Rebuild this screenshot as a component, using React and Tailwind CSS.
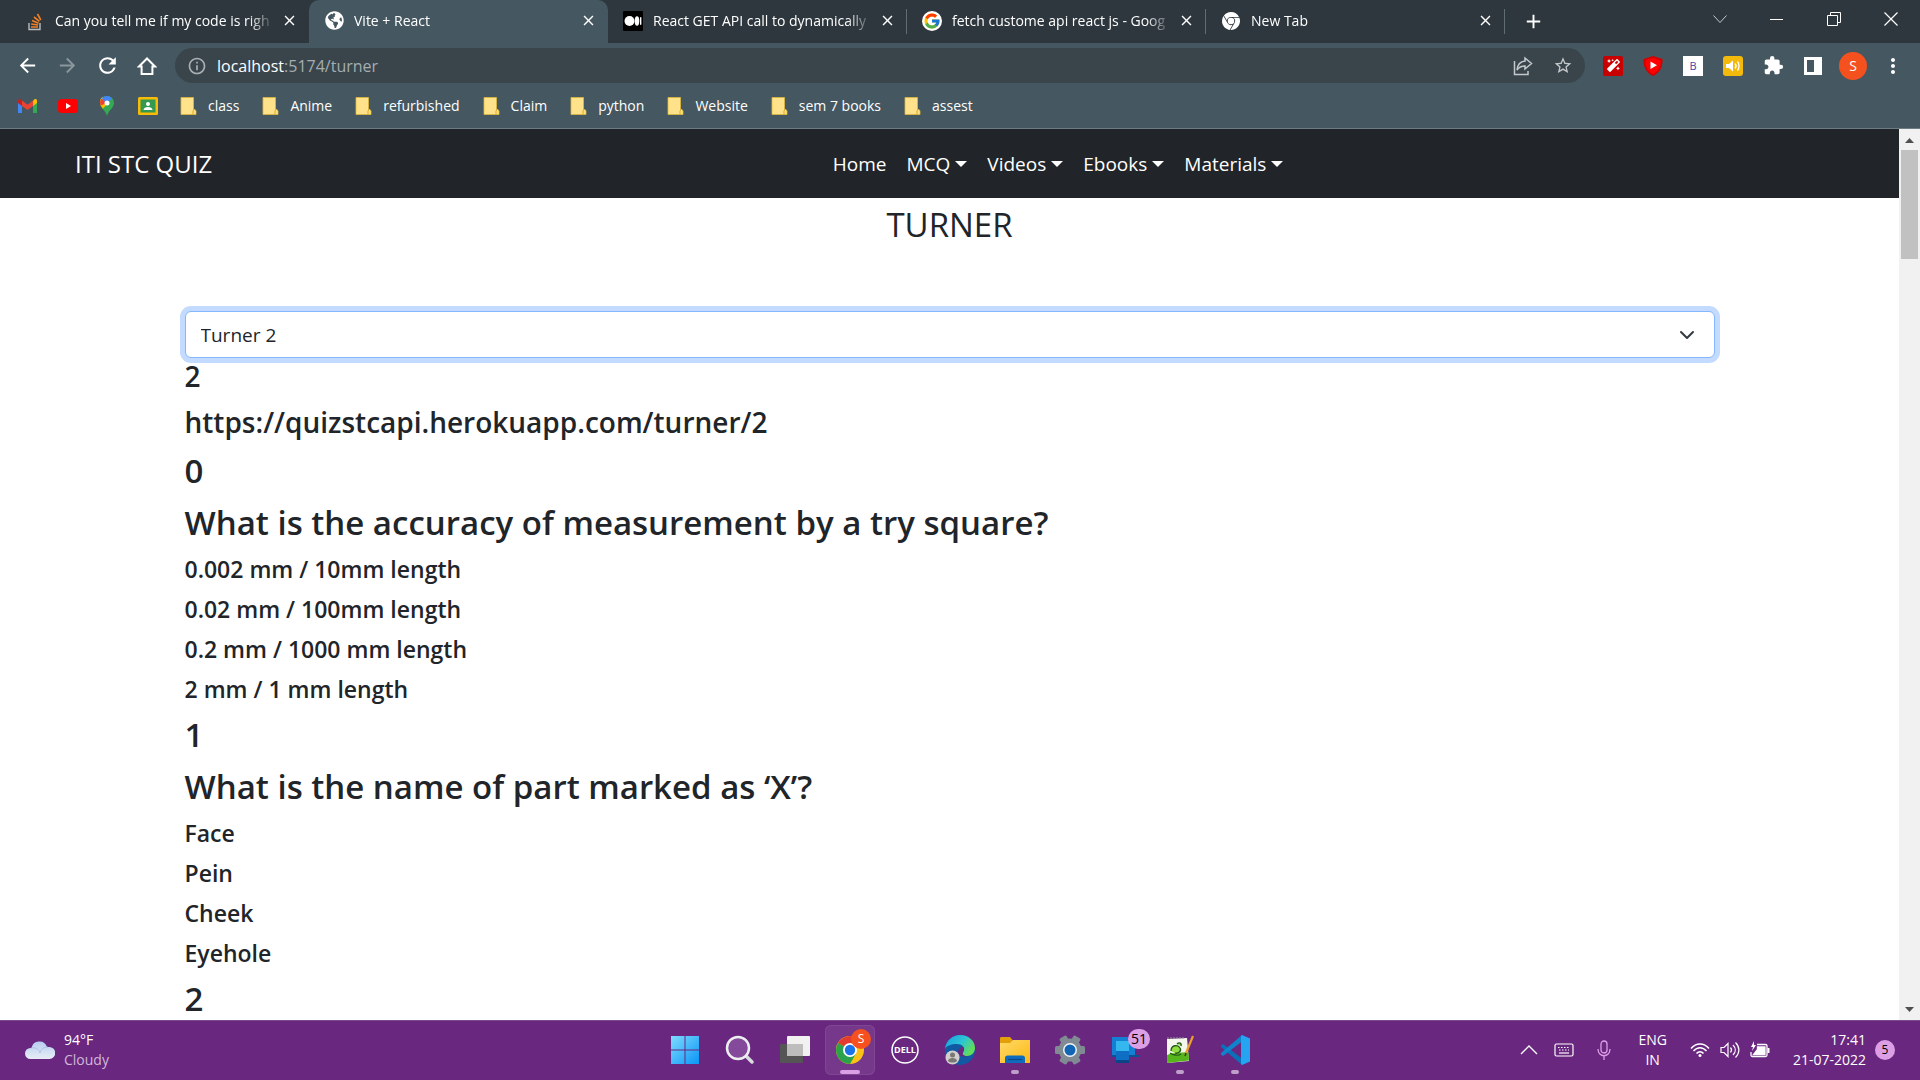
import React, { useState } from 'react';
import { FcGoogle } from 'react-icons/fc';
import { FaGlobeAmericas, FaMagic } from 'react-icons/fa';
import { SiGooglechrome } from 'react-icons/si';
import { MdArrowBack, MdArrowForward, MdClose, MdExtension, MdMoreVert, MdOutlineInfo, MdRefresh, MdStarBorder, MdAdd } from 'react-icons/md';

const StackIcon = () => (
    <svg width="18" height="20" viewBox="0 0 18 20" fill="none">
        <path d="M3 12v6.5h11V12" stroke="#bcbbbb" strokeWidth="1.4" />
        <path d="M5 16h7M5.2 13l6.9 1M6 9.6l6.5 2.6M8 6l5.4 4.3M11.5 3l3.3 6" stroke="#f48024" strokeWidth="1.6" />
    </svg>
);

const GoogleIcon = () => (
    <span className="flex size-5 items-center justify-center rounded-full bg-white">
        <FcGoogle size={18} />
    </span>
);

const MediumIcon = () => (
    <svg width="20" height="20" viewBox="0 0 20 20">
        <rect width="20" height="20" rx="1" fill="#000" />
        <g fill="#fff">
            <circle cx="6.5" cy="10" r="5" />
            <ellipse cx="14" cy="10" rx="2.3" ry="4.8" />
            <rect x="17" y="6" width="1.4" height="8" rx="0.7" />
        </g>
    </svg>
);

const HomeIcon = () => (
    <svg width="20" height="20" viewBox="0 0 20 20" fill="none" stroke="#fff" strokeWidth="2">
        <path d="M2 10.5 10 2.5l8 8h-2.6V18H4.6v-7.500z" />
    </svg>
);

const ShareIcon = () => (
    <svg width="20" height="20" viewBox="0 0 20 20" fill="none" stroke="#c3c8cb" strokeWidth="1.5">
        <path d="M1.500 5v13.500H15V15" />
        <path d="M12 2l6.500 5.500L12 13V10c-3.500 0-6 1-8 4 .5-5 3-8.500 8-9z" />
    </svg>
);

const GmailIcon = () => (
    <svg width="19" height="14" viewBox="0 0 19 14">
        <path d="M0 1.500V14h4V5z" fill="#4285f4" />
        <path d="M19 1.500V14h-4V5z" fill="#34a853" />
        <path d="M15 2v5l4-3V1.800C19 0 17.300-.3 16.200.6z" fill="#fbbc04" />
        <path d="M4 2v5L0 4V1.800C0 0 1.700-.3 2.800.6z" fill="#c5221f" />
        <path d="M4 1.500v5.400l5.500 4.200L15 6.900V1.500L9.500 5.700z" fill="#ea4335" />
    </svg>
);

const YoutubeIcon = () => (
    <svg width="20" height="14" viewBox="0 0 20 14">
        <rect width="20" height="14" rx="3.500" fill="#f00" />
        <path d="M8 4l5 3-5 3z" fill="#fff" />
    </svg>
);

const MapsIcon = () => (
    <svg width="14" height="20" viewBox="0 0 14 20">
        <path d="M7 0C3 0 0 3 0 7c0 5 5.500 7 7 13 1.500-6 7-8 7-13 0-4-3-7-7-7z" fill="#34a853" />
        <path d="M1 10C-1 6 0 2 3 1.100L8 7l-5 5.800z" fill="#fbbc04" />
        <path d="M1.600 2.500 7 7 .6 9.500C-.4 6.500 0 4.500 1.600 2.500z" fill="#ea4335" />
        <path d="M1.800 2.200C4-.6 9-.8 12 2.200L7 8z" fill="#4285f4" />
        <circle cx="7" cy="7" r="2.500" fill="#fff" />
    </svg>
);

const ClassroomIcon = () => (
    <svg width="20" height="18" viewBox="0 0 20 18">
        <rect width="20" height="18" rx="1.500" fill="#f9bb05" />
        <rect x="2.500" y="2.500" width="15" height="13" fill="#34994f" />
        <circle cx="10" cy="7" r="2" fill="#fff" />
        <path d="M5.500 13c0-4 9-4 9 0z" fill="#fff" />
    </svg>
);

const FolderIcon = () => (
    <svg width="17" height="18" viewBox="0 0 17 18">
        <path d="M1 .5h12.500v12H15l1 1.500v3.500H1z" fill="#ffe28a" stroke="#e0b93c" strokeWidth="0.800" />
        <path d="M13 17.500v-3.500l1-1.500" stroke="#d9a91e" fill="none" />
    </svg>
);

const ShieldPlayIcon = () => (
    <svg width="20" height="20" viewBox="0 0 20 20">
        <path d="M10 0l9.500 3c.5 8-3 14-9.500 17C3.500 17 0 11 .5 3z" fill="#d40000" />
        <path d="M10 2l7.500 2.500C18 11 15 15.500 10 18 5 15.500 2 11 2.500 4.500z" fill="#f00" />
        <path d="M7.500 5.500v7.500l6.500-3.700z" fill="#fff" />
    </svg>
);

const SpeakerIcon = () => (
    <svg width="20" height="20" viewBox="0 0 20 20">
        <rect width="20" height="20" rx="3" fill="#f3b90b" />
        <path d="M3 8h3l4-3.500v11L6 12H3z" fill="#fff" />
        <path d="M12 7.500c1.300 1.500 1.300 3.500 0 5M14.500 5.500c2 2.500 2 6.500 0 9" stroke="#fff" strokeWidth="1.300" fill="none" />
    </svg>
);

const SidePanelIcon = () => (
    <svg width="18" height="18" viewBox="0 0 18 18">
        <path d="M0 0h18v18H0zM3 3v12h7V3z" fill="#fff" fillRule="evenodd" />
    </svg>
);

const CloudIcon = () => (
    <svg width="30" height="22" viewBox="0 0 30 22">
        <defs>
            <linearGradient id="cloud" x1="0" y1="0" x2="0" y2="1">
                <stop offset="0" stopColor="#b7cdf0" />
                <stop offset="1" stopColor="#e8edf5" />
            </linearGradient>
        </defs>
        <path d="M5.500 20a5.500 5.500 0 0 1 0-11h1a8 8 0 0 1 15.500-1h2a6 6 0 0 1 .5 12z" fill="url(#cloud)" />
        <path d="M6 9c4-1 8 1 9 5 1-4 4-6 8-6" stroke="#a5bbdf" strokeWidth="0.800" fill="none" />
    </svg>
);

const StartIcon = () => (
    <svg width="30" height="30" viewBox="0 0 30 30">
        <defs>
            <linearGradient id="start" x1="0" y1="0" x2="1" y2="1">
                <stop offset="0" stopColor="#7fdcff" />
                <stop offset="1" stopColor="#0a95f5" />
            </linearGradient>
        </defs>
        <path d="M1 1h13.500v13.500H1zM15.500 1H29v13.500H15.500zM1 15.500h13.500V29H1zM15.500 15.500H29V29H15.500z" fill="url(#start)" />
    </svg>
);

const SearchIcon = () => (
    <svg width="30" height="30" viewBox="0 0 30 30" fill="none">
        <path d="M21 21l6 6" stroke="#d9dcdf" strokeWidth="3.500" strokeLinecap="round" />
        <circle cx="13" cy="13" r="11" fill="#84499a" stroke="#eceef0" strokeWidth="2.500" />
    </svg>
);

const TaskViewIcon = () => (
    <svg width="30" height="30" viewBox="0 0 30 30">
        <rect x="0" y="9" width="23" height="19" rx="1" fill="#555" />
        <rect x="7" y="1" width="23" height="20" rx="1" fill="#f1f1f1" />
        <path d="M7 9h16v12H8l-1-1z" fill="#bdbdbd" />
    </svg>
);

const ChromeIcon = () => (
    <svg width="28" height="28" viewBox="0 0 28 28">
        <circle cx="14" cy="14" r="14" fill="#fbc116" />
        <path d="M14 14L1.900 7A14 14 0 0 1 26.100 7z" fill="#e33b2e" />
        <path d="M14 14l6 3.500L14 28A14 14 0 0 1 1.900 7z" fill="#2ba24c" />
        <circle cx="14" cy="14" r="7" fill="#fff" />
        <circle cx="14" cy="14" r="5.200" fill="#1a73e8" />
    </svg>
);

const DellIcon = () => (
    <svg width="30" height="30" viewBox="0 0 30 30">
        <circle cx="15" cy="15" r="13" fill="none" stroke="#fff" strokeWidth="1.500" />
        <text x="15" y="18" textAnchor="middle" fontSize="9" fontWeight="700" fill="#fff" fontFamily="Open Sans, sans-serif">DELL</text>
    </svg>
);

const EdgeIcon = () => (
    <svg width="30" height="30" viewBox="0 0 30 30">
        <defs>
            <linearGradient id="edge" x1="0" y1="0" x2="1" y2="0.500">
                <stop offset="0" stopColor="#1b9de2" />
                <stop offset="0.600" stopColor="#2cc6d4" />
                <stop offset="1" stopColor="#62dc5a" />
            </linearGradient>
        </defs>
        <circle cx="15" cy="15" r="15" fill="#1259a4" />
        <path d="M0 14C1 5 8 0 15 0c9 0 15 6 15 13 0 5-4 8-8 8-4 0-6-2-4-4 3-5-1-8-6-8C6 9 1 11 0 14z" fill="url(#edge)" />
        <path d="M18 12c2 2 1 4 0 5.500-1 2 1 3.500 4 3.500-4 2-9 0-9-4 0-3 3-5 5-5z" fill="#69277f" />
        <circle cx="7.500" cy="22.500" r="7" fill="#d2d0ce" />
        <circle cx="7.500" cy="20" r="2.500" fill="#7a7774" />
        <path d="M3 26c0-4 9-4 9 0-2 2-7 2-9 0z" fill="#7a7774" />
    </svg>
);

const ExplorerIcon = () => (
    <svg width="30" height="28" viewBox="0 0 30 28">
        <defs>
            <linearGradient id="explorer" x1="0" y1="0" x2="1" y2="1">
                <stop offset="0" stopColor="#ffd968" />
                <stop offset="1" stopColor="#fdb913" />
            </linearGradient>
        </defs>
        <path d="M0 2.500C0 1.500.5 1 1.500 1H10l3 3.500V9H0z" fill="#e3a008" />
        <path d="M0 7h10l3-3h17v23H0z" fill="url(#explorer)" />
        <path d="M5 27v-5c0-1.500 1-2.500 2.500-2.500h15c1.500 0 2.500 1 2.500 2.500v5z" fill="#0f6cbd" />
        <path d="M8 23.500h14" stroke="#0b4a86" strokeWidth="1.200" />
    </svg>
);

const SettingsIcon = () => (
    <svg width="30" height="30" viewBox="0 0 30 30">
        <g fill="#808a93">
            <circle cx="15" cy="15" r="11.500" />
            <rect x="11" y="0" width="8" height="30" rx="1.500" transform="rotate(30 15 15)" />
            <rect x="11" y="0" width="8" height="30" rx="1.500" transform="rotate(90 15 15)" />
            <rect x="11" y="0" width="8" height="30" rx="1.500" transform="rotate(150 15 15)" />
        </g>
        <circle cx="15" cy="15" r="7" fill="#f2f2f2" />
        <circle cx="15" cy="15" r="5.500" fill="#1066b5" />
    </svg>
);

const PhoneIcon = () => (
    <svg width="30" height="30" viewBox="0 0 30 30">
        <path d="M2 2h23v18H2z" fill="#1380d3" />
        <path d="M1 20h28v2H1z" fill="#0b4f94" />
        <path d="M6 6h13v22H6z" fill="#0f6fc4" />
        <path d="M6 6h13v10H6z" fill="#33b7ee" />
        <path d="M6 25h13v3H6z" fill="#0a4686" />
    </svg>
);

const NotepadIcon = () => (
    <svg width="30" height="30" viewBox="0 0 30 30">
        <path d="M2 4l20-1 2 23-22 2z" fill="#f4f6ee" />
        <path d="M2 20c8-3 14-2 21.500-3l.5 8.500L2 28z" fill="#56b51c" />
        <path d="M3 4V2M6 4V2M9 4V2M12 4V2M15 4V2M18 4V2" stroke="#999" />
        <path d="M6 16c0-6 7-7 9-3 2 3-2 6-5 5M12 9c2-2 5-1 4 2M5 18c3 2 8 3 11 1" stroke="#23581a" strokeWidth="1.300" fill="#8fdd3e" />
        <path d="M28 1l-7 17" stroke="#e9a02c" strokeWidth="2.200" />
        <path d="M21 18l-1 3" stroke="#54330e" strokeWidth="1.500" />
    </svg>
);

const VscodeIcon = () => (
    <svg width="30" height="30" viewBox="0 0 30 30">
        <path d="M1 10.500l2-1.500L24 25l-2 5L1 12z" fill="#0a71b9" />
        <path d="M1 19.500L3 21 24 5l-2-5L1 18z" fill="#0f84cd" />
        <path d="M22 0l8 3.500v23L22 30l-1-1V1z" fill="#26a4f2" />
    </svg>
);

const tabs = [
    { title: 'Can you tell me if my code is righ', icon: <StackIcon /> },
    { title: 'Vite + React', icon: <FaGlobeAmericas size={19} />, active: true },
    { title: 'React GET API call to dynamically', icon: <MediumIcon />, divider: true },
    { title: 'fetch custome api react js - Goog', icon: <GoogleIcon />, divider: true },
    { title: 'New Tab', icon: <SiGooglechrome size={18} />, divider: true },
];

const bookmarks = ['class', 'Anime', 'refurbished', 'Claim', 'python', 'Website', 'sem 7 books', 'assest'];

const menus = ['MCQ', 'Videos', 'Ebooks', 'Materials'];

const questions = [
    {
        question: 'What is the accuracy of measurement by a try square?',
        options: ['0.002 mm / 10mm length', '0.02 mm / 100mm length', '0.2 mm / 1000 mm length', '2 mm / 1 mm length'],
    },
    {
        question: 'What is the name of part marked as ‘X’?',
        options: ['Face', 'Pein', 'Cheek', 'Eyehole'],
    },
    { question: '', options: [] },
];

const apps = [
    { name: 'Start', icon: <StartIcon /> },
    { name: 'Search', icon: <SearchIcon /> },
    { name: 'Task View', icon: <TaskViewIcon /> },
    { name: 'Google Chrome', icon: <ChromeIcon />, active: true },
    { name: 'My Dell', icon: <DellIcon /> },
    { name: 'Microsoft Edge', icon: <EdgeIcon /> },
    { name: 'File Explorer', icon: <ExplorerIcon />, running: true },
    { name: 'Settings', icon: <SettingsIcon /> },
    { name: 'Phone Link', icon: <PhoneIcon />, count: 51 },
    { name: 'Notepad++', icon: <NotepadIcon />, running: true },
    { name: 'Visual Studio Code', icon: <VscodeIcon />, running: true },
];

function TabStrip() {
    return (
        <div className="flex h-[43px] shrink-0 bg-[#2d373d] pl-[10px] text-white">
            {tabs.map((tab) => (
                <div key={tab.title} className={`relative flex w-[299px] items-center rounded-t-[10px] pb-[2px] pl-[15px] pr-[10px] ${tab.active ? 'bg-[#455760]' : ''}`}>
                    <span className="flex w-5 shrink-0 justify-center">{tab.icon}</span>
                    <span className="ml-[10px] flex-1 overflow-hidden whitespace-nowrap text-[14px] leading-5 [mask-image:linear-gradient(to_right,black_88%,transparent)]">
                        {tab.title}
                    </span>
                    <button aria-label="Close tab" className="ml-1 flex w-5 justify-center">
                        <MdClose size={17} />
                    </button>
                    {tab.divider && <span className="absolute right-0 top-[9px] h-[25px] w-px bg-[#5f6c73]" />}
                </div>
            ))}
            <button aria-label="New tab" className="flex w-14 items-center justify-center">
                <MdAdd size={23} />
            </button>
            <div className="ml-auto flex h-[38px]">
                <button aria-label="Search tabs" className="flex w-[57px] items-center justify-center">
                    <svg width="14" height="8" viewBox="0 0 14 8" fill="none" stroke="#c5cacd"><path d="M.5.5L7 7.500 13.500.5" /></svg>
                </button>
                <button aria-label="Minimize" className="flex w-[57px] items-center justify-center">
                    <svg width="13" height="13" viewBox="0 0 13 13" fill="none" stroke="#fff"><path d="M0 6.500h13" /></svg>
                </button>
                <button aria-label="Restore" className="flex w-[57px] items-center justify-center">
                    <svg width="14" height="14" viewBox="0 0 14 14" fill="none" stroke="#fff"><path d="M.5 3.500h10v10H.5zM3.500 3.500V.5h10v10h-3" /></svg>
                </button>
                <button aria-label="Close" className="flex w-[58px] items-center justify-center">
                    <svg width="14" height="14" viewBox="0 0 14 14" fill="none" stroke="#fff" strokeWidth="1.200"><path d="M.5.5l13 13M13.500.5l-13 13" /></svg>
                </button>
            </div>
        </div>
    );
}

function Toolbar() {
    return (
        <div className="flex h-[45px] shrink-0 items-center bg-[#455760] pl-[7px] text-white">
            <button aria-label="Back" className="flex w-10 justify-center"><MdArrowBack size={23} /></button>
            <button aria-label="Forward" className="flex w-10 justify-center text-[#8b979d]"><MdArrowForward size={23} /></button>
            <button aria-label="Reload" className="flex w-10 justify-center"><MdRefresh size={25} /></button>
            <button aria-label="Home" className="flex w-10 justify-center"><HomeIcon /></button>
            <div className="ml-2 flex h-[35px] flex-1 items-center rounded-full bg-[#39454b] px-3">
                <MdOutlineInfo size={20} className="text-[#aab1b5]" />
                <span className="ml-[10px] text-[16px] leading-6 text-[#a5adb1]">
                    <span className="text-white">localhost</span>:5174/turner
                </span>
                <button aria-label="Share" className="ml-auto flex w-5 justify-center"><ShareIcon /></button>
                <button aria-label="Bookmark" className="ml-5 flex w-5 justify-center text-[#c3c8cb]"><MdStarBorder size={23} /></button>
            </div>
            <div className="ml-2 flex items-center pr-[7px]">
                <button aria-label="Magic" className="flex w-10 justify-center">
                    <span className="flex size-5 items-center justify-center rounded-xs bg-[#c80000]"><FaMagic size={13} /></span>
                </button>
                <button aria-label="Blocker" className="flex w-10 justify-center"><ShieldPlayIcon /></button>
                <button aria-label="Bootstrap" className="flex w-10 justify-center">
                    <span className="size-5 bg-white text-center text-[11px] leading-5 text-[#4a44a8]">B</span>
                </button>
                <button aria-label="Volume" className="flex w-10 justify-center"><SpeakerIcon /></button>
                <button aria-label="Extensions" className="flex w-10 justify-center"><MdExtension size={21} /></button>
                <button aria-label="Side panel" className="flex w-10 justify-center"><SidePanelIcon /></button>
                <button aria-label="Profile" className="flex w-10 justify-center">
                    <span className="size-7 rounded-full bg-[#f4511e] text-center text-[14px] leading-7">S</span>
                </button>
                <button aria-label="Menu" className="flex w-10 justify-center"><MdMoreVert size={24} /></button>
            </div>
        </div>
    );
}

function BookmarksBar() {
    return (
        <div className="flex h-[41px] shrink-0 items-center border-b border-[#6e7c83] bg-[#455760] pb-1 pl-[18px] text-[14px] leading-5 text-white">
            <a href="#gmail" aria-label="Gmail" className="flex w-10"><GmailIcon /></a>
            <a href="#youtube" aria-label="YouTube" className="flex w-10"><YoutubeIcon /></a>
            <a href="#maps" aria-label="Maps" className="flex w-10 pl-[2px]"><MapsIcon /></a>
            <a href="#classroom" aria-label="Classroom" className="flex w-10"><ClassroomIcon /></a>
            <div className="flex gap-[23px] pl-[2px]">
                {bookmarks.map((name) => (
                    <button key={name} className="flex items-center gap-[11px]">
                        <FolderIcon />
                        {name}
                    </button>
                ))}
            </div>
        </div>
    );
}

function Navbar() {
    return (
        <nav className="flex h-[69px] items-center bg-[#212529] px-[75px] text-white">
            <a href="#home" className="text-[24px] leading-9">ITI STC QUIZ</a>
            <ul className="flex flex-1 justify-center gap-5 pl-20 text-[19px] leading-[30px]">
                <li><a href="#home">Home</a></li>
                {menus.map((menu) => (
                    <li key={menu}>
                        <button className="flex items-center gap-[5px]">
                            {menu}
                            <span className="border-x-[6px] border-t-[6px] border-x-transparent border-t-white" />
                        </button>
                    </li>
                ))}
            </ul>
        </nav>
    );
}

function Quiz() {
    const [selected, setSelected] = useState('2');

    return (
        <div className="min-w-0 flex-1 overflow-hidden">
            <Navbar />
            <h1 className="pt-[6px] text-center text-[33px] leading-[42px]">TURNER</h1>
            <div className="mx-auto max-w-[1650px] px-[60px] pt-[65px]">
                <div className="relative">
                    <select
                        aria-label="Turner set"
                        value={selected}
                        onChange={(e) => setSelected(e.target.value)}
                        className="block h-[47px] w-full appearance-none rounded-md border border-[#86b7fe] bg-white px-[15px] text-[19px] leading-[30px] outline-none ring-5 ring-[#c2dbfe]"
                    >
                        <option value="1">Turner 1</option>
                        <option value="2">Turner 2</option>
                        <option value="3">Turner 3</option>
                    </select>
                    <svg className="pointer-events-none absolute right-5 top-4 h-4 w-4" viewBox="0 0 16 16" fill="none" stroke="#343a40" strokeWidth="2" strokeLinecap="round" strokeLinejoin="round">
                        <path d="M2 5l6 6 6-6" />
                    </svg>
                </div>
                <h4 className="mb-[10px] text-[28px] font-semibold leading-9">{selected}</h4>
                <h4 className="mb-[10px] text-[28px] font-semibold leading-9">https://quizstcapi.herokuapp.com/turner/{selected}</h4>
                {questions.map((item, index) => (
                    <div key={index}>
                        <h3 className="mb-[10px] text-[33px] font-semibold leading-[42px]">{index}</h3>
                        <h3 className="mb-[10px] text-[33px] font-semibold leading-[42px]">{item.question}</h3>
                        {item.options.map((option) => (
                            <h5 key={option} className="mb-[10px] text-[23px] font-semibold leading-[30px]">{option}</h5>
                        ))}
                    </div>
                ))}
            </div>
        </div>
    );
}

function Scrollbar() {
    return (
        <div className="flex w-[21px] shrink-0 flex-col items-center bg-[#f1f1f1]">
            <svg width="21" height="21" viewBox="0 0 21 21"><path d="M6 14h9l-4.500-5z" fill="#505050" /></svg>
            <div className="h-[109px] w-[17px] bg-[#c1c1c1]" />
            <svg className="mt-auto" width="21" height="21" viewBox="0 0 21 21"><path d="M6 8h9l-4.500 5z" fill="#505050" /></svg>
        </div>
    );
}

function Taskbar() {
    return (
        <footer className="grid h-[60px] shrink-0 grid-cols-[1fr_auto_1fr] items-center border-t border-[#7b4a8c] bg-[#69277f] pb-[2px] text-[14px] leading-5 text-white">
            <button className="flex items-center gap-[9px] pl-[25px] text-left">
                <CloudIcon />
                <span>
                    <span className="block">94°F</span>
                    <span className="block text-[#d0b8d8]">Cloudy</span>
                </span>
            </button>
            <div className="flex gap-[5px]">
                {apps.map((app) => (
                    <button
                        key={app.name}
                        aria-label={app.name}
                        className={`relative flex size-[50px] items-center justify-center rounded-md ${app.active ? 'bg-[#75388a] ring-1 ring-inset ring-[#7f4793]' : ''}`}
                    >
                        {app.icon}
                        {app.active && <span className="absolute right-1 top-1 size-5 rounded-full bg-[#f4511e] text-center text-[12px] leading-5">S</span>}
                        {app.count && <span className="absolute right-0 top-1 h-5 rounded-full bg-[#dc9fe6] px-[3px] text-[14px] leading-5 text-black">{app.count}</span>}
                        {app.active && <span className="absolute bottom-[1px] h-1 w-5 rounded-full bg-[#dc9fe6]" />}
                        {app.running && <span className="absolute bottom-[1px] h-1 w-2 rounded-full bg-[#bf9fca]" />}
                    </button>
                ))}
            </div>
            <div className="flex items-center justify-end pr-[25px]">
                <svg width="18" height="10" viewBox="0 0 18 10" fill="none" stroke="#fff" strokeWidth="1.300"><path d="M1 9l8-8 8 8" /></svg>
                <svg className="ml-4" width="20" height="14" viewBox="0 0 20 14" fill="none" stroke="#fff" strokeWidth="1.200">
                    <rect x="1" y="1" width="18" height="12" rx="1.500" />
                    <path d="M4 4.500h12M5 7h10" strokeDasharray="1.500 1.500" />
                    <path d="M5 10h10" />
                </svg>
                <svg className="ml-[23px]" width="14" height="20" viewBox="0 0 14 20" fill="none" stroke="#dc9fe6" strokeWidth="1.300">
                    <rect x="4" y="1" width="6" height="12" rx="3" />
                    <path d="M1 9c0 9 12 9 12 0M7 16v4" />
                </svg>
                <span className="ml-[27px] text-center">ENG<br />IN</span>
                <svg className="ml-[23px]" width="20" height="16" viewBox="0 0 20 16" fill="none" stroke="#fff" strokeWidth="1.500">
                    <path d="M1 6.500c5-6 13-6 18 0M3.500 9c4-4.500 9-4.500 13 0M6.500 11.500c2-2.500 5-2.500 7 0" />
                    <circle cx="10" cy="13.500" r="1.500" fill="#fff" stroke="none" />
                </svg>
                <svg className="ml-[10px]" width="20" height="18" viewBox="0 0 20 18" fill="none" stroke="#fff" strokeWidth="1.200">
                    <path d="M1 6.500h3l4-4v13l-4-4H1z" />
                    <path d="M10.500 6.500c1.300 1.500 1.300 3.500 0 5M13 4c3 3 3 7 0 10M15.500 1.500c4.500 4.500 4.500 10.500 0 15" />
                </svg>
                <svg className="ml-[10px]" width="20" height="18" viewBox="0 0 20 18" fill="none" stroke="#fff" strokeWidth="1.300">
                    <path d="M7 3.500h8.500c1 0 1.500.5 1.500 1.500v9c0 1-.5 1.500-1.500 1.500h-13c-1 0-1.500-.5-1.500-1.500v-3" />
                    <path d="M7.500 6h7.500v7.500H3.500l4-5z" fill="#fff" />
                    <path d="M18.500 7v5" strokeWidth="2" />
                    <path d="M4 0L1 6h2L2 10l4-6H4z" fill="#fff" stroke="none" />
                </svg>
                <time className="ml-[23px] text-right">17:41<br />21-07-2022</time>
                <span className="ml-[9px] size-5 rounded-full bg-[#dc9fe6] text-center text-[12px] leading-5 text-black">5</span>
            </div>
        </footer>
    );
}

function App() {
    return (
        <div className="flex h-screen flex-col overflow-hidden bg-white font-['Open_Sans','Noto_Sans',sans-serif] text-[#212529]">
            <TabStrip />
            <Toolbar />
            <BookmarksBar />
            <main className="flex min-h-0 flex-1">
                <Quiz />
                <Scrollbar />
            </main>
            <Taskbar />
        </div>
    );
}

export default App;
